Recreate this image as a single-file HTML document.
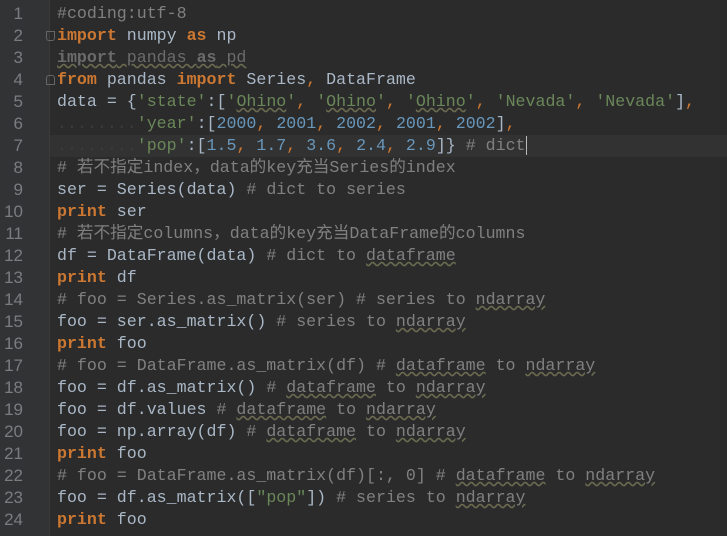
<!DOCTYPE html>
<html><head><meta charset="utf-8"><style>
html,body{margin:0;padding:0;width:727px;height:536px;overflow:hidden;background:#2b2b2b;}
#g{position:absolute;left:0;top:0;width:49px;height:536px;background:#313335;border-right:1px solid #3a3a3a;}
.ln{position:absolute;left:0;width:23px;text-align:right;color:#7a7d80;font:17px "Liberation Sans",sans-serif;}
.l{position:absolute;left:57px;white-space:pre;font-family:"Liberation Mono","Noto Sans CJK SC",monospace;font-size:16.62px;color:#a9b7c6;line-height:22px;}
.k{color:#cc7832;font-weight:bold}
.s{color:#6a8759}
.n{color:#6897bb}
.c{color:#808080}
.p{color:#cc7832}
.w{text-decoration:underline wavy #6a6a50;}
.cur{position:absolute;left:49px;right:0;top:135px;height:22px;background:#323232;}
.d{color:#3c3c3c}
</style></head><body>
<div class="cur"></div>
<div id="g"></div>
<div class="l" style="top:3px"><span class="c">#coding:utf-8</span></div>
<div class="l" style="top:25px"><span class="k">import</span> numpy <span class="k">as</span> np</div>
<div class="l" style="top:47px;color:#6b6b6b"><span class="w"><b>import</b> pandas <b>as</b> pd</span></div>
<div class="l" style="top:69px"><span class="k">from</span> pandas <span class="k">import</span> Series<span class="p">,</span> DataFrame</div>
<div class="l" style="top:91px">data = {<span class="s">'state'</span>:[<span class="s">'<span class="w">Ohino</span>'</span><span class="p">,</span> <span class="s">'<span class="w">Ohino</span>'</span><span class="p">,</span> <span class="s">'<span class="w">Ohino</span>'</span><span class="p">,</span> <span class="s">'Nevada'</span><span class="p">,</span> <span class="s">'Nevada'</span>]<span class="p">,</span></div>
<div class="l" style="top:113px"><span class="d">........</span><span class="s">'year'</span>:[<span class="n">2000</span><span class="p">,</span> <span class="n">2001</span><span class="p">,</span> <span class="n">2002</span><span class="p">,</span> <span class="n">2001</span><span class="p">,</span> <span class="n">2002</span>]<span class="p">,</span></div>
<div class="l" style="top:135px"><span class="d">........</span><span class="s">'pop'</span>:[<span class="n">1.5</span><span class="p">,</span> <span class="n">1.7</span><span class="p">,</span> <span class="n">3.6</span><span class="p">,</span> <span class="n">2.4</span><span class="p">,</span> <span class="n">2.9</span>]} <span class="c">#&nbsp;dict</span><span style="border-left:1px solid #bbb"></span></div>
<div class="l" style="top:157px"><span class="c"># 若不指定index，data的key充当Series的index</span></div>
<div class="l" style="top:179px">ser = Series(data) <span class="c"># dict to series</span></div>
<div class="l" style="top:201px"><span class="k">print</span> ser</div>
<div class="l" style="top:223px"><span class="c"># 若不指定columns，data的key充当DataFrame的columns</span></div>
<div class="l" style="top:245px">df = DataFrame(data) <span class="c"># dict to <span class="w">dataframe</span></span></div>
<div class="l" style="top:267px"><span class="k">print</span> df</div>
<div class="l" style="top:289px"><span class="c"># foo = Series.as_matrix(ser) # series to <span class="w">ndarray</span></span></div>
<div class="l" style="top:311px">foo = ser.as_matrix() <span class="c"># series to <span class="w">ndarray</span></span></div>
<div class="l" style="top:333px"><span class="k">print</span> foo</div>
<div class="l" style="top:355px"><span class="c"># foo = DataFrame.as_matrix(df) # <span class="w">dataframe</span> to <span class="w">ndarray</span></span></div>
<div class="l" style="top:377px">foo = df.as_matrix() <span class="c"># <span class="w">dataframe</span> to <span class="w">ndarray</span></span></div>
<div class="l" style="top:399px">foo = df.values <span class="c"># <span class="w">dataframe</span> to <span class="w">ndarray</span></span></div>
<div class="l" style="top:421px">foo = np.array(df) <span class="c"># <span class="w">dataframe</span> to <span class="w">ndarray</span></span></div>
<div class="l" style="top:443px"><span class="k">print</span> foo</div>
<div class="l" style="top:465px"><span class="c"># foo = DataFrame.as_matrix(df)[:, 0] # <span class="w">dataframe</span> to <span class="w">ndarray</span></span></div>
<div class="l" style="top:487px">foo = df.as_matrix([<span class="s">"pop"</span>]) <span class="c"># series to <span class="w">ndarray</span></span></div>
<div class="l" style="top:509px"><span class="k">print</span> foo</div>
<div class="ln" style="top:4px">1</div><div class="ln" style="top:26px">2</div><div class="ln" style="top:48px">3</div><div class="ln" style="top:70px">4</div><div class="ln" style="top:92px">5</div><div class="ln" style="top:114px">6</div><div class="ln" style="top:136px">7</div><div class="ln" style="top:158px">8</div><div class="ln" style="top:180px">9</div><div class="ln" style="top:202px">10</div><div class="ln" style="top:224px">11</div><div class="ln" style="top:246px">12</div><div class="ln" style="top:268px">13</div><div class="ln" style="top:290px">14</div><div class="ln" style="top:312px">15</div><div class="ln" style="top:334px">16</div><div class="ln" style="top:356px">17</div><div class="ln" style="top:378px">18</div><div class="ln" style="top:400px">19</div><div class="ln" style="top:422px">20</div><div class="ln" style="top:444px">21</div><div class="ln" style="top:466px">22</div><div class="ln" style="top:488px">23</div><div class="ln" style="top:510px">24</div>
<div style="position:absolute;left:46px;top:31px;width:7px;height:8px;border:1px solid #666;border-radius:0 0 3px 3px;"></div>
<div style="position:absolute;left:46px;top:75px;width:7px;height:8px;border:1px solid #666;border-radius:3px 3px 0 0;"></div>
</body></html>
